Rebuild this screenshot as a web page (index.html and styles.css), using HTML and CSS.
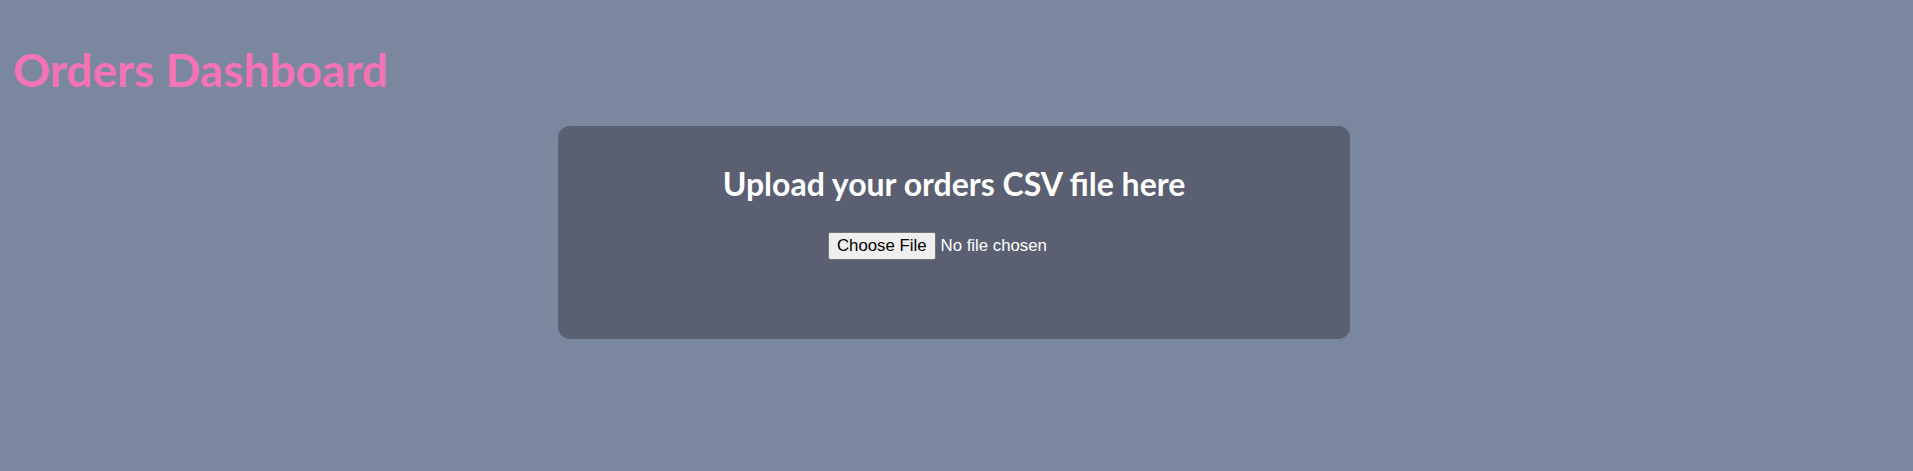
FILE: index.html
```html
<!DOCTYPE html>
<html lang="en">
<head>
    <meta charset="UTF-8">
    <meta name="viewport" content="width=device-width, initial-scale=1.0">
    <title>Orders Dashboard</title>
    <link rel="stylesheet" href="styles.css">
</head>
<body>
    <h1 class="page-title">Orders Dashboard</h1>

    <div class="upload-card">
        <h2>Upload your orders CSV file here</h2>
        <input type="file" id="csvFile" accept=".csv">
    </div>
</body>
</html>
```

FILE: styles.css
```css
body {
    font-family: 'Lato', 'Segoe UI', sans-serif;
    background-color: #7a879f;
    margin: 0;
    padding: 8px 18px 8px 13px;
}

.page-title {
    color: #f472b6;
    font-size: 46px;
    font-weight: 700;
    margin: 34px 0 29px 0;
    line-height: 1.2;
}

.upload-card {
    width: 792px;
    height: 213px;
    box-sizing: border-box;
    margin: 0 auto;
    background-color: #5a5f72;
    border-radius: 12px;
    padding: 38px 20px;
    text-align: center;
}

.upload-card h2 {
    color: white;
    font-size: 32px;
    font-weight: 700;
    margin: 0 0 29px 0;
}

.upload-card input[type="file"] {
    width: 252px;
    color: white;
    font-family: 'Liberation Sans', Arial, sans-serif;
    font-size: 16.8px;
}

.upload-card input[type="file"]::file-selector-button {
    padding: 2px 7px;
    margin-right: 5px;
}
```
